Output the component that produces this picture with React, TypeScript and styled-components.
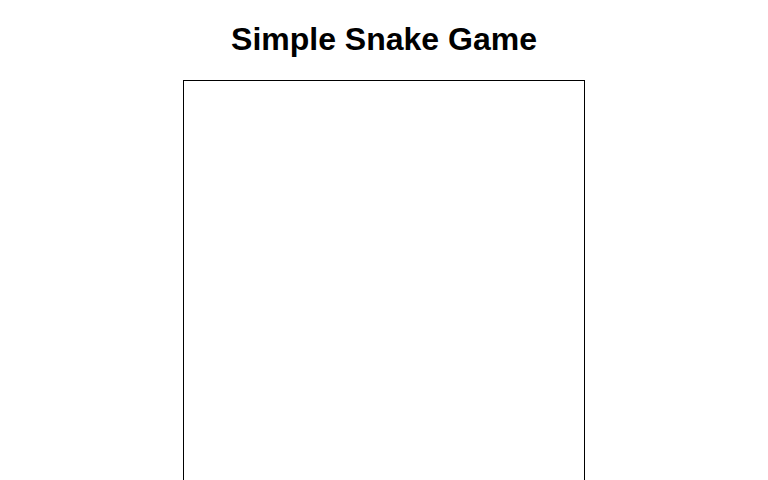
import React from "react";
import styled, { createGlobalStyle } from "styled-components";

const GlobalStyle = createGlobalStyle`
  body {
    margin: 0;
    background: #fff;
    font-family: "Liberation Sans", Arial, sans-serif;
    text-align: center;
  }
`;

const Title = styled.h1`
  font-size: 32px;
  font-weight: bold;
  margin: 21.44px 0;
  color: #000;
`;

const Board = styled.canvas`
  display: block;
  margin: 0 auto;
  border: 1px solid #000;
  background: #fff;
`;

const App = () => {
  return (
    <>
      <GlobalStyle />
      <Title>Simple Snake Game</Title>
      <Board width={400} height={400} />
    </>
  );
};

export default App;
